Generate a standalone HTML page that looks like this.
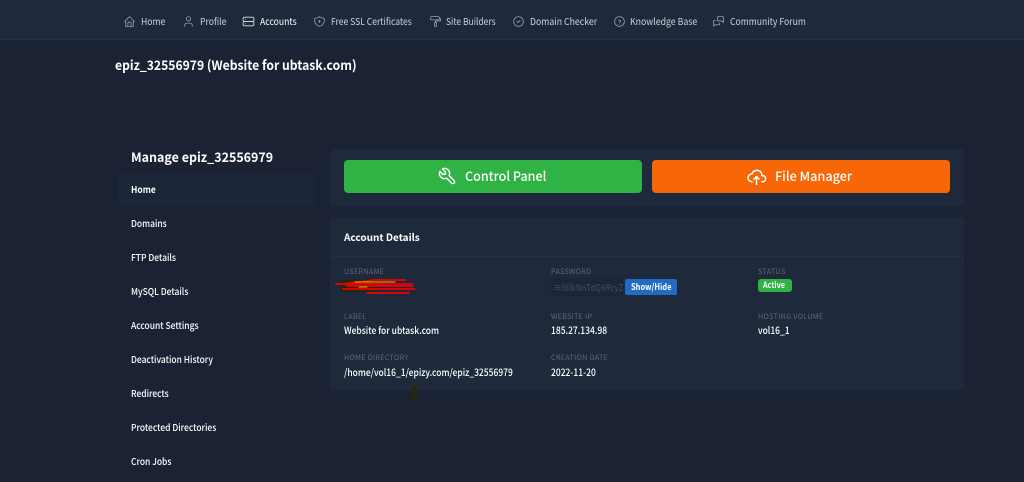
<!DOCTYPE html>
<html lang="en"><head><meta charset="utf-8"><title>Manage epiz_32556979</title>
<style>
*{box-sizing:border-box}
html,body{margin:0;padding:0;width:1024px;height:482px;overflow:hidden;background:#1a2234}
body{position:relative;font-family:"Noto Sans CJK JP","Liberation Sans",sans-serif;color:#fff}
.t{position:absolute;white-space:nowrap;line-height:14px;transform-origin:0 50%}
.n{font-size:9.5px;color:#cdd3dc;top:14px;transform:scaleX(.91)}
.s{font-size:9.5px;left:131px;font-weight:500;color:#fff;transform:scaleX(.89)}
.l{font-size:7.2px;color:#5f6a7c;letter-spacing:.3px}
.v{font-size:10px;color:#fff;font-weight:500;transform:scaleX(.85)}
.box{position:absolute;background:#1e293b}
svg{position:absolute;fill:none;stroke-linecap:round;stroke-linejoin:round}
.ni{stroke:#9aa3b1;stroke-width:1.5}
</style></head><body>
<div class="box" style="left:0;top:0;width:1024px;height:40px;border-bottom:1px solid #263245"></div>
<svg class="ni" style="left:123px;top:15px" width="13" height="13" viewBox="0 0 24 24"><path d="M3 12 12 3l9 9M5 10v11h14V10M9 21v-6a2 2 0 0 1 2-2h2a2 2 0 0 1 2 2v6"/></svg>
<span class="t n" style="left:141px">Home</span>
<svg class="ni" style="left:182px;top:15px" width="13" height="13" viewBox="0 0 24 24"><circle cx="12" cy="7" r="4"/><path d="M5 21v-2a4 4 0 0 1 4-4h6a4 4 0 0 1 4 4v2"/></svg>
<span class="t n" style="left:200px">Profile</span>
<svg class="ni" style="left:242px;top:15px;stroke:#dfe3e8" width="13" height="13" viewBox="0 0 24 24"><rect x="2" y="4" width="20" height="8" rx="3"/><rect x="2" y="12" width="20" height="8" rx="3"/><path d="M7 8v0M7 16v0"/></svg>
<span class="t n" style="left:260px;color:#fff">Accounts</span>
<svg class="ni" style="left:313px;top:15px" width="13" height="13" viewBox="0 0 24 24"><path d="M12 3a12 12 0 0 0 8.500 3A12 12 0 0 1 12 21 12 12 0 0 1 3.500 6 12 12 0 0 0 12 3"/><circle cx="12" cy="11" r="1"/><path d="M12 12v2"/></svg>
<span class="t n" style="left:331px;transform:scaleX(.9)">Free SSL Certificates</span>
<svg class="ni" style="left:429px;top:15px" width="13" height="13" viewBox="0 0 24 24"><rect x="3" y="3" width="16" height="6" rx="2"/><path d="M19 6h2v5h-9v3"/><rect x="10" y="14" width="4" height="7" rx="1"/></svg>
<span class="t n" style="left:446px;transform:scaleX(.89)">Site Builders</span>
<svg class="ni" style="left:512px;top:15px" width="13" height="13" viewBox="0 0 24 24"><circle cx="12" cy="12" r="9"/><path d="m9 12 2 2 4-4"/></svg>
<span class="t n" style="left:530px;transform:scaleX(.92)">Domain Checker</span>
<svg class="ni" style="left:613px;top:15px" width="13" height="13" viewBox="0 0 24 24"><circle cx="12" cy="12" r="9"/><path d="M12 17v.01M12 13.500a2 2 0 1 0-1.500-3.300"/></svg>
<span class="t n" style="left:630px;transform:scaleX(.92)">Knowledge Base</span>
<svg class="ni" style="left:712px;top:15px" width="13" height="13" viewBox="0 0 24 24"><path d="M21 14l-3-3h-7a1 1 0 0 1-1-1V4a1 1 0 0 1 1-1h9a1 1 0 0 1 1 1v10M14 15v2a1 1 0 0 1-1 1H6l-3 3V11a1 1 0 0 1 1-1h2"/></svg>
<span class="t n" style="left:730px">Community Forum</span>

<span class="t" style="left:115px;top:57px;font-size:13px;font-weight:700;line-height:16px;transform:scaleX(.936)">epiz_32556979 (Website for ubtask.com)</span>

<span class="t" style="left:131px;top:149px;font-size:13px;font-weight:700;line-height:16px;transform:scaleX(.96)">Manage epiz_32556979</span>
<div style="position:absolute;left:118px;top:172px;width:198px;height:33px;background:#1b2639"></div>
<span class="t s" style="top:182px;font-weight:700">Home</span>
<span class="t s" style="top:216px">Domains</span>
<span class="t s" style="top:250px">FTP Details</span>
<span class="t s" style="top:284px">MySQL Details</span>
<span class="t s" style="top:318px">Account Settings</span>
<span class="t s" style="top:352px">Deactivation History</span>
<span class="t s" style="top:386px">Redirects</span>
<span class="t s" style="top:420px">Protected Directories</span>
<span class="t s" style="top:454px">Cron Jobs</span>

<div class="box" style="left:330px;top:149px;width:634px;height:57px;border-radius:3px"></div>
<div style="position:absolute;left:344px;top:160px;width:298px;height:33px;background:#2fb344;border-radius:4px"></div>
<svg style="left:437px;top:166px;stroke:#fff;stroke-width:1.7" width="20" height="20" viewBox="0 0 24 24"><path d="M7 10h3V7L6.500 3.500a6 6 0 0 1 8 8l6 6a2 2 0 0 1-3 3l-6-6a6 6 0 0 1-8-8L7 10"/></svg>
<span class="t" style="left:465px;top:167px;font-size:13px;font-weight:500;line-height:17px;transform:scaleX(.965)">Control Panel</span>
<div style="position:absolute;left:652px;top:160px;width:298px;height:33px;background:#f76707;border-radius:4px"></div>
<svg style="left:746px;top:166px;stroke:#fff;stroke-width:1.7" width="21" height="21" viewBox="0 0 24 24"><path d="M7 18a4.600 4.400 0 0 1 0-9 5 4.500 0 0 1 11 2h1a3.500 3.500 0 0 1 0 7h-1M9 15l3-3 3 3M12 12v9"/></svg>
<span class="t" style="left:775px;top:167px;font-size:13px;font-weight:500;line-height:17px;transform:scaleX(.975)">File Manager</span>

<div class="box" style="left:330px;top:217px;width:634px;height:173px;border-radius:3px"></div>
<div style="position:absolute;left:330px;top:256px;width:634px;height:1px;background:#253046"></div>
<span class="t" style="left:344px;top:230px;font-size:10px;font-weight:700">Account Details</span>

<span class="t l" style="left:344px;top:265px">USERNAME</span>
<span class="t l" style="left:551px;top:265px">PASSWORD</span>
<span class="t l" style="left:758px;top:265px">STATUS</span>
<svg style="left:335px;top:276px" width="84" height="20" viewBox="0 0 84 20"><path d="M5 4h38v12H5z" fill="#1f2a10" stroke="none"/><g stroke="#f00000" stroke-width="1.800"><path d="M8 8 40 4h30"/><path d="M1 8h76"/><path d="M12 10h66"/><path d="M8 13h72"/><path d="M32 17h42"/></g><path d="M20 6h40M24 11h8" stroke="#d8c000" stroke-width="1"/></svg>

<div style="position:absolute;left:551px;top:278px;width:72px;height:18px;background:#1c2639;border-radius:2px"></div>
<span class="t" style="left:554px;top:281px;font-size:9px;color:#445064;letter-spacing:.25px;transform:scaleX(.84)">≡f6fkNnTdQ8RcyZ</span>
<div style="position:absolute;left:625px;top:279px;width:52px;height:16px;background:#206bc4;border-radius:2px"></div>
<span class="t" style="left:631px;top:280px;font-size:9px;font-weight:700;transform:scaleX(.83)">Show/Hide</span>
<div style="position:absolute;left:758px;top:279px;width:34px;height:13px;background:#2fb344;border-radius:3px"></div>
<span class="t" style="left:763px;top:278px;font-size:8.500px;font-weight:700;transform:scaleX(.85)">Active</span>

<span class="t l" style="left:344px;top:310px">LABEL</span>
<span class="t l" style="left:551px;top:310px">WEBSITE IP</span>
<span class="t l" style="left:758px;top:310px">HOSTING VOLUME</span>
<span class="t v" style="left:344px;top:323px">Website for ubtask.com</span>
<span class="t v" style="left:551px;top:323px">185.27.134.98</span>
<span class="t v" style="left:758px;top:323px">vol16_1</span>

<span class="t l" style="left:344px;top:351px">HOME DIRECTORY</span>
<span class="t l" style="left:551px;top:351px">CREATION DATE</span>
<span class="t v" style="left:344px;top:365px">/home/vol16_1/epizy.com/epiz_32556979</span>
<span class="t v" style="left:551px;top:365px">2022-11-20</span>
<div style="position:absolute;left:412px;top:386px;width:5px;height:14px;background:#22290f"></div>
</body></html>
